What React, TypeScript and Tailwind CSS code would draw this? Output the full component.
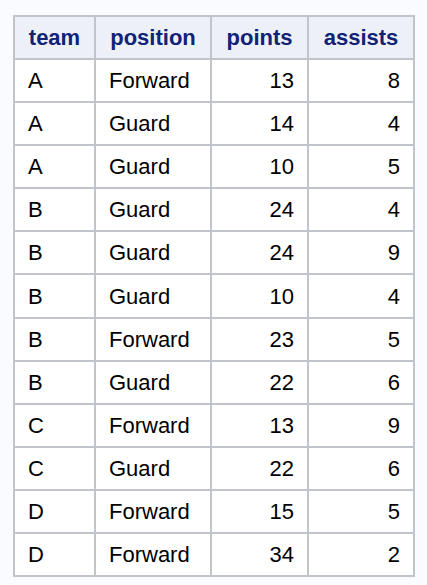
import React from 'react'

const rows: [string, string, number, number][] = [
  ['A', 'Forward', 13, 8],
  ['A', 'Guard', 14, 4],
  ['A', 'Guard', 10, 5],
  ['B', 'Guard', 24, 4],
  ['B', 'Guard', 24, 9],
  ['B', 'Guard', 10, 4],
  ['B', 'Forward', 23, 5],
  ['B', 'Guard', 22, 6],
  ['C', 'Forward', 13, 9],
  ['C', 'Guard', 22, 6],
  ['D', 'Forward', 15, 5],
  ['D', 'Forward', 34, 2],
]

const cell = 'border-2 border-[#c1c4ca] px-[13px] py-0'

export default function App() {
  return (
    <div className="min-h-[585px] bg-[#fafbfe] pl-[13px] pt-[15px] font-['Liberation_Sans',Arial,sans-serif] text-[22px]">
      <table className="w-[400px] table-fixed border-collapse bg-white text-black">
        <colgroup>
          <col className="w-[81px]" />
          <col className="w-[116px]" />
          <col className="w-[97px]" />
          <col className="w-[106px]" />
        </colgroup>
        <thead>
          <tr className="h-[43px] bg-[#edf0f7] text-[#112277]">
            {['team', 'position', 'points', 'assists'].map((h) => (
              <th key={h} className={`${cell} text-center font-bold`}>
                {h}
              </th>
            ))}
          </tr>
        </thead>
        <tbody>
          {rows.map(([team, pos, pts, ast], i) => (
            <tr key={i} className="h-[43.1px]">
              <td className={`${cell} text-left`}>{team}</td>
              <td className={`${cell} text-left`}>{pos}</td>
              <td className={`${cell} text-right`}>{pts}</td>
              <td className={`${cell} text-right`}>{ast}</td>
            </tr>
          ))}
        </tbody>
      </table>
    </div>
  )
}
